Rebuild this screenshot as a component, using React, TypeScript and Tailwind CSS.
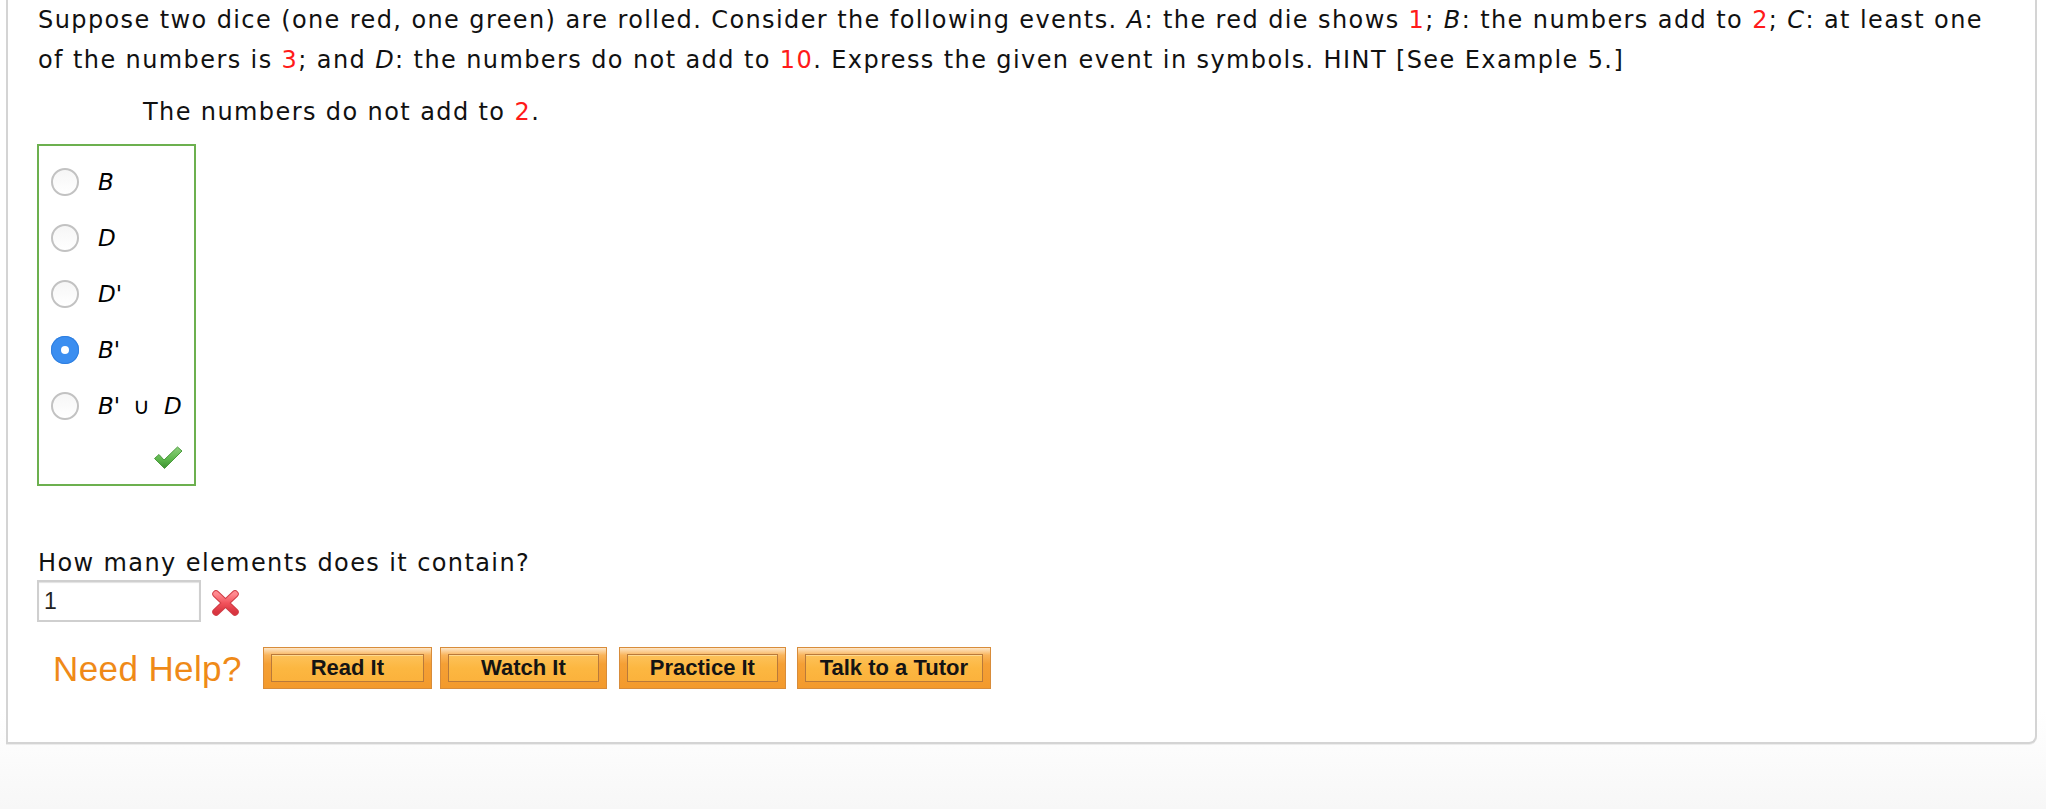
import React from "react";

const Red = ({ children }: { children: React.ReactNode }) => (
  <span className="text-[#ff1a1a]">{children}</span>
);
const I = ({ children }: { children: React.ReactNode }) => <i className="italic">{children}</i>;

function Radio({ selected }: { selected?: boolean }) {
  if (selected) {
    return (
      <span className="flex h-[28px] w-[28px] shrink-0 items-center justify-center rounded-full bg-[#3b8ef0] shadow-[inset_0_0_0_1px_#2f7fe0]">
        <span className="h-[8px] w-[8px] rounded-full bg-white" />
      </span>
    );
  }
  return (
    <span className="h-[28px] w-[28px] shrink-0 rounded-full border-2 border-[#c2c2c2] bg-[linear-gradient(#f6f6f6,#ffffff)]" />
  );
}

function Option({ label, selected }: { label: React.ReactNode; selected?: boolean }) {
  return (
    <div className="flex h-[56px] items-center gap-[19px] pl-[12px]">
      <Radio selected={selected} />
      <span className="text-[23px] leading-none text-black [font-family:'DejaVu_Sans',Verdana,sans-serif]">
        {label}
      </span>
    </div>
  );
}

function HelpButton({ text, w, ml }: { text: string; w: string; ml: string }) {
  return (
    <div
      className={`${w} ${ml} flex h-[42px] flex-col border border-[#d88c3a] bg-[linear-gradient(#fde6c8_0%,#f9b45a_18%,#f5a035_40%,#f39a2c_100%)] px-[7px] py-[6px]`}
    >
      <div className="flex flex-1 items-center justify-center border border-[#b9793a] bg-[linear-gradient(#fdc25a,#fcb741_50%,#fbb23c)] shadow-[inset_0_1px_0_#fed98f]">
        <span className="text-[22px] font-bold leading-none text-[#141414] [font-family:'Liberation_Sans',Arial,sans-serif]">
          {text}
        </span>
      </div>
    </div>
  );
}

export default function App() {
  return (
    <div className="h-[809px] w-[2046px] overflow-hidden bg-[linear-gradient(#ffffff_0%,#ffffff_88%,#f7f7f7_100%)]">
      <div className="ml-[6px] mr-[9px] rounded-br-[8px] border-x-2 border-b-2 border-[#d4d4d4] bg-white pb-[53px] pl-[30px] shadow-[0_1px_0_#ececec] [font-family:'DejaVu_Sans',Verdana,sans-serif]">
        <p className="pr-[4px] text-[24px] leading-[40px] tracking-[1.4px] text-[#111]">
          Suppose two dice (one red, one green) are rolled. Consider the following events. <I>A</I>: the red die
          shows <Red>1</Red>; <I>B</I>: the numbers add to <Red>2</Red>; <I>C</I>: at least one
          <br />
          of the numbers is <Red>3</Red>; and <I>D</I>: the numbers do not add to <Red>10</Red>. Express the given
          event in symbols. HINT [See Example 5.]
        </p>
        <p className="mt-[12px] pl-[105px] text-[24px] leading-[40px] tracking-[1.4px] text-[#111]">
          The numbers do not add to <Red>2</Red>.
        </p>

        <div className="mt-[12px] ml-[-1px] w-[159px] border-2 border-[#6cb04f] pt-[8px]">
          <Option label={<i>B</i>} />
          <Option label={<i>D</i>} />
          <Option label={<i>D'</i>} />
          <Option label={<i>B'</i>} selected />
          <Option
            label={
              <span className="flex items-center">
                <i>B'</i>
                <span className="ml-[13px] mr-[14px] not-italic">∪</span>
                <i>D</i>
              </span>
            }
          />
          <div className="flex justify-end pr-[11px] pt-[11px] pb-[14px]">
            <svg width="30" height="25" viewBox="0 0 30 25">
              <defs>
                <linearGradient id="gck" x1="0" y1="0" x2="0" y2="1">
                  <stop offset="0" stopColor="#8ed07d" />
                  <stop offset="0.6" stopColor="#5bb54a" />
                  <stop offset="1" stopColor="#3d8f33" />
                </linearGradient>
              </defs>
              <path
                d="M1.5 13.5 L6 9.5 L11 15 L24.5 2 L29 6 L11.5 23.5 Z"
                fill="url(#gck)"
                stroke="#4a9a3c"
                strokeWidth="1"
                strokeLinejoin="round"
              />
            </svg>
          </div>
        </div>

        <p className="mt-[62px] text-[24px] leading-[30px] tracking-[1.4px] text-[#111]">
          How many elements does it contain?
        </p>
        <div className="mt-[2px] ml-[-1px] flex items-center gap-[11px]">
          <div className="flex h-[42px] w-[164px] items-center border-2 border-[#cfcfcf] bg-white pl-[5px] shadow-[inset_0_1px_1px_#e2e2e2]">
            <span className="text-[23px] leading-none text-[#222] [font-family:'Liberation_Sans',Arial,sans-serif]">1</span>
          </div>
          <svg width="27" height="26" viewBox="0 0 27 26" className="mt-[4px]">
            <defs>
              <linearGradient id="gx" x1="0" y1="0" x2="0" y2="1">
                <stop offset="0" stopColor="#ff8a90" />
                <stop offset="0.5" stopColor="#f2535c" />
                <stop offset="1" stopColor="#d93540" />
              </linearGradient>
            </defs>
            <path d="M4 4 L23 22 M23 4 L4 22" stroke="#cf3a43" strokeWidth="7.5" strokeLinecap="round" />
            <path d="M4 4 L23 22 M23 4 L4 22" stroke="url(#gx)" strokeWidth="5.5" strokeLinecap="round" />
          </svg>
        </div>

        <div className="mt-[25px] flex items-center">
          <span className="ml-[15px] mr-[21px] text-[35px] leading-none tracking-[0.4px] text-[#ef8a18] [font-family:'Liberation_Sans',Arial,sans-serif]">
            Need Help?
          </span>
          <div className="flex">
            <HelpButton text="Read It" w="w-[169px]" ml="ml-0" />
            <HelpButton text="Watch It" w="w-[167px]" ml="ml-[8px]" />
            <HelpButton text="Practice It" w="w-[167px]" ml="ml-[12px]" />
            <HelpButton text="Talk to a Tutor" w="w-[194px]" ml="ml-[11px]" />
          </div>
        </div>
      </div>
    </div>
  );
}
